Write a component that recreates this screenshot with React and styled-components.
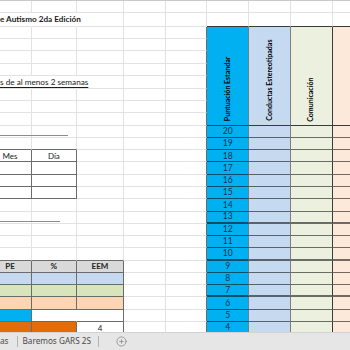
import styled, { createGlobalStyle } from "styled-components"
import { CirclePlus } from "lucide-react"

const GlobalStyle = createGlobalStyle`
    html, body {
        margin: 0;
        padding: 0;
        background: #ffffff;
        overflow: hidden;
    }
`

const COLS = [43, 44.7, 47.6, 41.7, 41.3, 42, 41.7, 41.7, 28.3]
const ROWS = [12.3, 13.4, ...Array(8).fill(12.375), ...Array(17).fill(12.27)]

const GRID = "#e2e2e2"
const DARK = "#6b6b6b"
const INK = "rgba(0, 0, 0, 0.55)"
const NONE = "transparent"

const SCORE_FILL = { 5: "#00b0f0", 6: "#c5d9f1", 7: "#ebf1de", 8: "#fde9d9" }
const SCORE_EDGE = { 5: "#6f7f88", 6: "#7d7d7d", 7: "#3a3a3a", 8: "#555555" }

const RESULT_FILL = {
    21: ["#d9d9d9", "#d9d9d9", "#d9d9d9"],
    22: ["#c5d9f1", "#c5d9f1", "#c5d9f1"],
    23: ["#d8e4bc", "#d8e4bc", "#d8e4bc"],
    24: ["#fcd5b4", "#fcd5b4", "#fcd5b4"],
    25: ["#00b0f0", NONE, NONE],
    26: ["#e26b0a", "#e26b0a", NONE],
}

const HEADERS = [
    { col: 5, label: "Puntuación Estandar" },
    { col: 6, label: "Conductas Estereotipadas" },
    { col: 7, label: "Comunicación" },
    { col: 8, label: "" },
]

function cellLook(r, c) {
    let bg = NONE
    let right = GRID
    let bottom = GRID
    let thick = false

    // text that spills over the next cells hides their gridlines
    if ((r === 1 || r === 6) && c < 2) right = NONE

    // Mes / Día box
    if (r === 11 && c < 2) bottom = DARK
    if (r >= 12 && r <= 15 && c < 2) {
        right = DARK
        bottom = DARK
    }

    // PE / % / EEM box
    if (r === 20 && c < 3) bottom = DARK
    if (r >= 21 && c < 3) {
        bg = RESULT_FILL[r][c]
        right = DARK
        bottom = DARK
        if (r === 25 && c === 1) right = NONE
    }

    // score table
    if (r >= 2 && c === 4) right = DARK
    if (r === 1 && c >= 5) bottom = "#3a3a3a"
    if (r >= 10 && c >= 5) {
        bg = SCORE_FILL[c]
        right = SCORE_EDGE[c]
        bottom = INK
        thick = r === 17 || r === 20 || r === 23
    }

    return { bg, right, bottom, thick }
}

function cellContent(r, c) {
    if (r >= 10 && c === 5) return 30 - r
    if (r === 1 && c === 0) return <Spill $bold>e Autismo 2da Edición</Spill>
    if (r === 6 && c === 0) return <Spill $underline>s de al menos 2 semanas</Spill>
    if (r === 10 && c === 0) return <SignLine $width={79} />
    if (r === 17 && c === 0) return <SignLine $width={71} />
    if (r === 12 && c === 0) return "Mes"
    if (r === 12 && c === 1) return "Día"
    if (r === 21 && c < 3) return ["PE", "%", "EEM"][c]
    if (r === 26 && c === 2) return "4"
    return null
}

function cellAlign(r, c) {
    if ((r === 10 || r === 17) && c === 0) return "sign"
    if ((r === 1 || r === 6) && c === 0) return "spill"
    return "center"
}

export default function App() {
    const cells = []
    ROWS.forEach((_, r) => {
        COLS.forEach((_, c) => {
            if (r >= 2 && r <= 9 && c >= 5) return
            const look = cellLook(r, c)
            cells.push(
                <Cell
                    key={`${r}-${c}`}
                    $bg={look.bg}
                    $right={look.right}
                    $bottom={look.bottom}
                    $thick={look.thick}
                    $bold={r === 21 && c < 3}
                    $number={r >= 10 && c === 5}
                    $align={cellAlign(r, c)}
                >
                    {cellContent(r, c)}
                </Cell>
            )
        })
    })

    return (
        <>
            <GlobalStyle />
            <Sheet>
                <Grid>
                    {HEADERS.map((h) => (
                        <HeaderCell key={h.col} $col={h.col + 1} $bg={SCORE_FILL[h.col]} $right={SCORE_EDGE[h.col]}>
                            {h.label && <VerticalLabel>{h.label}</VerticalLabel>}
                        </HeaderCell>
                    ))}
                    {cells}
                </Grid>
                <TabBar>
                    <Tab $cut>as</Tab>
                    <TabDivider />
                    <Tab>Baremos GARS 2S</Tab>
                    <TabDivider />
                    <AddSheet>
                        <CirclePlus size={11} strokeWidth={1.3} />
                    </AddSheet>
                </TabBar>
            </Sheet>
        </>
    )
}

const Sheet = styled.div`
    width: 350px;
    height: 350px;
    overflow: hidden;
    display: flex;
    flex-direction: column;
    background: #ffffff;
    font-family: Lato, "Liberation Sans", sans-serif;
`

const Grid = styled.div`
    display: grid;
    grid-template-columns: ${COLS.map((w) => `${w}px`).join(" ")};
    grid-template-rows: ${ROWS.map((h) => `${h}px`).join(" ")};
    margin-left: -11px;
    height: 331px;
    flex-shrink: 0;
    overflow: hidden;
    border-top: 1px solid #c9c9c9;
`

const Cell = styled.div`
    box-sizing: border-box;
    background: ${(p) => p.$bg};
    border-right: 1px solid ${(p) => p.$right};
    border-bottom: ${(p) => (p.$thick ? 2 : 1)}px solid ${(p) => p.$bottom};
    display: flex;
    align-items: ${(p) => (p.$align === "sign" ? "flex-end" : "center")};
    justify-content: ${(p) => (p.$align === "center" ? "center" : "flex-start")};
    font-size: ${(p) => (p.$number ? "8.5px" : "8px")};
    font-weight: ${(p) => (p.$bold ? 700 : 400)};
    color: ${(p) => (p.$number ? "#10324a" : "#222222")};
    line-height: 1;
    white-space: nowrap;
    min-width: 0;
`

const Spill = styled.span`
    position: relative;
    z-index: 1;
    flex-shrink: 0;
    padding-left: 11px;
    font-size: ${(p) => (p.$bold ? "8.2px" : "8.2px")};
    font-weight: ${(p) => (p.$bold ? 700 : 400)};
    text-decoration: ${(p) => (p.$underline ? "underline" : "none")};
    text-underline-offset: 1.5px;
    color: #1c1c1c;
    white-space: nowrap;
`

const SignLine = styled.span`
    position: relative;
    z-index: 1;
    flex-shrink: 0;
    width: ${(p) => p.$width}px;
    height: 1px;
    margin-bottom: 1px;
    background: #8c8c8c;
`

const HeaderCell = styled.div`
    grid-column: ${(p) => p.$col};
    grid-row: 3 / 11;
    box-sizing: border-box;
    background: ${(p) => p.$bg};
    border-right: 1px solid ${(p) => p.$right};
    border-bottom: 1px solid #3a3a3a;
    display: flex;
    flex-direction: column;
    justify-content: flex-end;
    align-items: center;
    padding-bottom: 0;
`

const VerticalLabel = styled.span`
    writing-mode: vertical-rl;
    transform: rotate(180deg) scaleY(0.9);
    font-size: 7.8px;
    font-weight: 700;
    color: #000000;
    white-space: nowrap;
    line-height: 1;
`

const TabBar = styled.div`
    flex: 1;
    box-sizing: border-box;
    display: flex;
    align-items: center;
    background: #e6e6e6;
    border-top: 1px solid #d2d2d2;
    font-family: "Noto Sans", "Open Sans", sans-serif;
    font-size: 8.2px;
    color: #4a4a4a;
`

const Tab = styled.span`
    padding: ${(p) => (p.$cut ? "0 8px 0 0" : "0 7px 0 5px")};
    white-space: nowrap;
    line-height: 1;
`

const TabDivider = styled.span`
    width: 1px;
    height: 11px;
    background: #b4b4b4;
`

const AddSheet = styled.span`
    display: flex;
    margin-left: 17px;
    color: #707070;
`
